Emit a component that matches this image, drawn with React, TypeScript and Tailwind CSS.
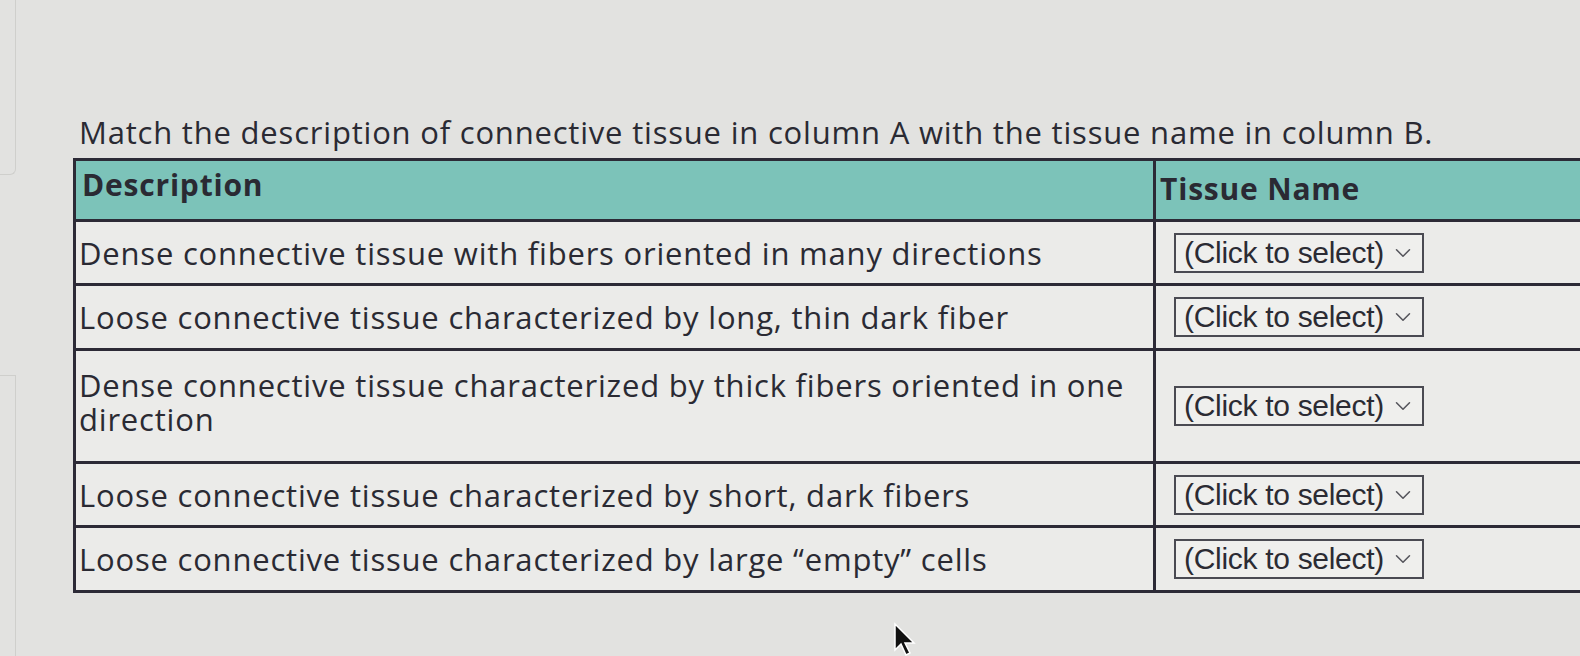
import { ChevronDown } from "lucide-react";

const rows = [
  { text: "Dense connective tissue with fibers oriented in many directions", h: "h-[64px]", pad: "" },
  { text: "Loose connective tissue characterized by long, thin dark fiber", h: "h-[65px]", pad: "" },
  { text: "Dense connective tissue characterized by thick fibers oriented in one direction", h: "h-[113px]", pad: "pb-[8px]" },
  { text: "Loose connective tissue characterized by short, dark fibers", h: "h-[64px]", pad: "" },
  { text: "Loose connective tissue characterized by large \u201cempty\u201d cells", h: "h-[65px]", pad: "" },
];

function SelectBox() {
  return (
    <div className="flex items-center h-[40px] w-[250px] border-2 border-[#4a4a52] bg-[#efefed] pl-[8px] tracking-normal">
      <span className="font-['Liberation_Sans',Arial,sans-serif] text-[30px] leading-none text-[#2b2b33] tracking-[-0.3px]">
        (Click to select)
      </span>
      <ChevronDown className="ml-[6px] w-[26px] h-[26px] text-[#55555c]" strokeWidth={1.4} />
    </div>
  );
}

export default function App() {
  return (
    <div className="relative h-[656px] w-[1580px] overflow-hidden bg-[#e2e2e0] flex font-['Open_Sans',sans-serif] tracking-[0.8px]">
      {/* faint edge of neighbouring panel */}
      <div className="w-[16px] flex flex-col shrink-0">
        <div className="h-[175px] border-r border-b border-[#cfcfcc] rounded-br-[6px]" />
        <div className="flex-1 mt-[200px] border-r border-t border-[#cfcfcc]" />
      </div>

      <div className="pl-[57px] pt-[112px]">
        <p className="pl-[6px] text-[31px] leading-[40px] text-[#2a2a33]">
          Match the description of connective tissue in column A with the tissue name in column B.
        </p>

        <div className="mt-[6px] w-[1560px] border-[3px] border-[#2c2a36] text-[#2a2a33]">
          {/* header */}
          <div className="flex h-[58px] bg-[#7cc3b9]">
            <div className="w-[1080px] border-r-[3px] border-[#2c2a36] pl-[6px] pt-[1px] font-bold text-[30px]">
              Description
            </div>
            <div className="flex-1 pl-[4px] pt-[5px] font-bold text-[30px]">Tissue Name</div>
          </div>
          {rows.map((r) => (
            <div key={r.text} className={`flex ${r.h} bg-[#ebebe9] border-t-[3px] border-[#2c2a36]`}>
              <div className={`w-[1080px] border-r-[3px] border-[#2c2a36] pl-[3px] flex items-center text-[31px] leading-[34px] pr-[10px] ${r.pad}`}>
                {r.text}
              </div>
              <div className="flex-1 flex items-center pl-[18px]">
                <SelectBox />
              </div>
            </div>
          ))}
        </div>
      </div>

      {/* mouse pointer */}
      <svg className="absolute left-[893px] top-[622px]" width="26" height="36" viewBox="0 0 26 36">
        <path d="M2 2 L2 28 L8 22 L13 33 L17 31 L12 21 L21 21 Z" fill="#111" stroke="#fff" strokeWidth="1.5" />
      </svg>
    </div>
  );
}
